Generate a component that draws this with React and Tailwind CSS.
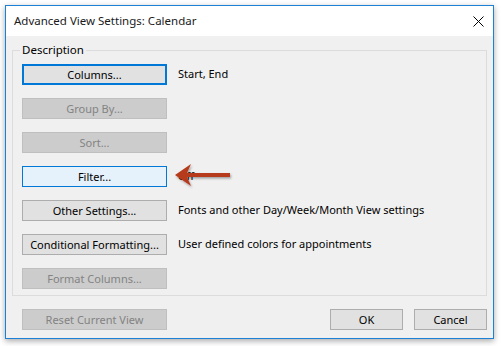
const font = { fontFamily: '"Noto Sans", "Open Sans", sans-serif' };

const Btn = ({ label, variant = 'normal', className = '' }) => {
  const styles = {
    normal: 'bg-[#e1e1e1] border border-[#adadad] text-black',
    focus: 'bg-[#e1e1e1] border-2 border-[#0078d7] text-black',
    hover: 'bg-[#e5f1fb] border border-[#0078d7] text-black',
    disabled: 'bg-[#cccccc] border border-[#bfbfbf] text-[#838383]',
  };
  return (
    <div
      className={`h-[21px] flex items-center justify-center text-[11px] leading-none ${styles[variant]} ${className}`}
    >
      {label}
    </div>
  );
};

const rows = [
  { label: 'Columns...', variant: 'focus', desc: 'Start, End' },
  { label: 'Group By...', variant: 'disabled' },
  { label: 'Sort...', variant: 'disabled' },
  { label: 'Filter...', variant: 'hover', desc: 'Off', arrow: true },
  { label: 'Other Settings...', desc: 'Fonts and other Day/Week/Month View settings' },
  { label: 'Conditional Formatting...', desc: 'User defined colors for appointments' },
  { label: 'Format Columns...', variant: 'disabled' },
];

export default function App() {
  return (
    <div className="w-[502px] h-[346px] bg-white pt-[5px] pl-[5px]" style={font}>
      <div className="w-[489px] h-[334px] border border-[#1c80d4] bg-[#f0f0f0] flex flex-col shadow-[0_2px_6px_rgba(0,0,0,0.35)]">
        <div className="h-[30px] bg-white flex items-center justify-between pl-[8px] pr-[9px]">
          <span className="text-[11.5px] text-[#1a1a1a]">Advanced View Settings: Calendar</span>
          <svg width="11" height="11" viewBox="0 0 11 11">
            <path d="M0.5 0.5 L10.5 10.5 M10.5 0.5 L0.5 10.5" stroke="#000" strokeWidth="1" />
          </svg>
        </div>
        <div className="flex-1 flex flex-col px-[6px] pt-[7px]">
          <fieldset className="border border-[#dcdcdc] h-[253px] pl-[9px] pr-[9px] pt-[7px]">
            <legend className="ml-[-2px] px-[2px] text-[11.5px] leading-[14px] text-black">Description</legend>
            <div className="flex flex-col gap-[13px]">
              {rows.map((r) => (
                <div key={r.label} className="flex items-center gap-[11px] relative">
                  <Btn label={r.label} variant={r.variant} className="w-[145px] shrink-0" />
                  {r.desc && <span className="text-[11px] text-black">{r.desc}</span>}
                  {r.arrow && (
                    <svg
                      className="absolute left-[151px] top-[-5px]"
                      width="64"
                      height="30"
                      viewBox="0 0 64 30"
                    >
                      <defs>
                        <filter id="sh" x="-20%" y="-40%" width="140%" height="180%">
                          <feDropShadow dx="1" dy="1.5" stdDeviation="1" floodColor="#000" floodOpacity="0.35" />
                        </filter>
                      </defs>
                      <g filter="url(#sh)" fill="#b63a1b">
                        <path d="M2 14 L18 3 L14 12 L57 12 L57 16 L14 16 L18 25 Z" />
                      </g>
                    </svg>
                  )}
                </div>
              ))}
            </div>
          </fieldset>
          <div className="flex items-center mt-[13px] pl-[10px]">
            <Btn label="Reset Current View" variant="disabled" className="w-[145px]" />
            <Btn label="OK" className="w-[73px] ml-auto" />
            <Btn label="Cancel" className="w-[73px] ml-[11px] mr-[0px]" />
          </div>
        </div>
      </div>
    </div>
  );
}
